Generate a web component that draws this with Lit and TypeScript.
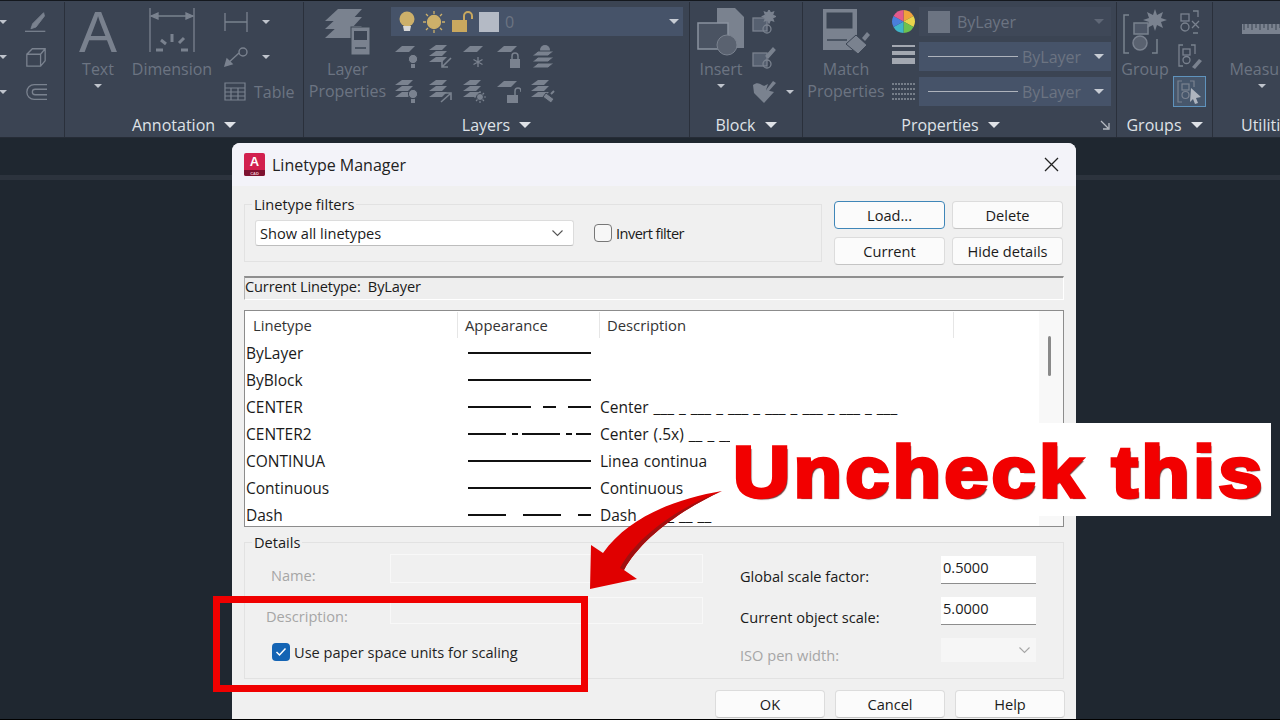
import { css, html, LitElement, svg } from 'lit';
import { customElement } from 'lit/decorators.js';

const rows = [
  { name: 'ByLayer', dash: '', desc: '' },
  { name: 'ByBlock', dash: '', desc: '' },
  { name: 'CENTER', dash: '63 12 13 12 23', desc: 'Center ___ _ ___ _ ___ _ ___ _ ___ _ ___ _ ___' },
  { name: 'CENTER2', dash: '38 6 6 4 38 6 6 4 15', desc: 'Center (.5x) __ _ __' },
  { name: 'CONTINUA', dash: '', desc: 'Linea continua' },
  { name: 'Continuous', dash: '', desc: 'Continuous' },
  { name: 'Dash', dash: '38 17 38 17 13', desc: 'Dash __ __ __ __' },
];

const DIM = '#7a828f';

const oneSheet = (badge: unknown) => html`<svg width="24" height="24" viewBox="0 0 24 24" fill=${DIM}>
  <path d="M7 1h13l-6 6H0z" />${badge}
</svg>`;

const stackWith = (badge: unknown) => html`<svg width="24" height="24" viewBox="0 0 24 24" fill=${DIM}>
  <path d="M7 0h11l-5 5H0z" /><path d="M7 6h11l-5 5H0z" /><path d="M7 12h11l-5 5H0z" />${badge}
</svg>`;

const bulbBadge = svg`<circle cx="18" cy="14" r="4.6" stroke="#3b4453" /><rect x="16" y="19" width="4" height="4" />`;
const lockBadge = svg`<rect x="13" y="14" width="10" height="9" /><path d="M15 14v-3a3 3 0 0 1 6 0v3" fill="none" stroke=${DIM} stroke-width="1.5" />`;
const openLockBadge = svg`<rect x="10" y="15" width="11" height="8" /><path d="M18 15v-4a3 3 0 0 1 6 0v1" fill="none" stroke=${DIM} stroke-width="1.5" />`;
const snowBadge = svg`<path d="M15 12v10M10.5 14.5l9 5M10.5 19.5l9-5" stroke=${DIM} stroke-width="1.3" fill="none" />`;
const sunBadge = svg`<circle cx="17" cy="17" r="3.5" stroke="#3b4453" /><path d="M17 11v2M17 21v2M11 17h2M21 17h2M13 13l1.5 1.5M19.5 19.5L21 21M13 21l1.5-1.5M19.5 14.5L21 13" stroke=${DIM} stroke-width="1.2" fill="none" />`;
const arrowDownBadge = svg`<path d="M22 13l-9 9M13 16v6h6" stroke=${DIM} stroke-width="1.6" fill="none" />`;
const arrowUpBadge = svg`<path d="M12 22l9-8M15 13h7v7" stroke=${DIM} stroke-width="1.6" fill="none" />`;
const brushBadge = svg`<path d="M15 13l8 6-3 4-8-6z" stroke="#3b4453" /><path d="M20 14l3-3" stroke=${DIM} stroke-width="2" />`;

@customElement('app-root')
export class AppRoot extends LitElement {
  static override styles = css`
    :host {
      display: block;
      width: 1280px;
      height: 720px;
      font-family: 'Open Sans', 'Liberation Sans', sans-serif;
    }

    .stage {
      position: relative;
      width: 1280px;
      height: 720px;
      overflow: hidden;
      background: #1f2730;
    }

    /* ribbon */
    .ribbon {
      display: flex;
      background: #3b4453;
      border-top: 1px solid #14181e;
      box-sizing: border-box;
      height: 138px;
      border-bottom: 1px solid #262c36;
      padding-top: 1px;
    }
    .panel {
      flex: none;
      display: flex;
      flex-direction: column;
      border-right: 1px solid #2a303b;
      box-sizing: border-box;
    }
    .body {
      display: flex;
      height: 112px;
    }
    .title {
      height: 24px;
      display: flex;
      align-items: center;
      justify-content: center;
      gap: 9px;
      color: #dfe2e7;
      font-size: 16px;
      position: relative;
    }
    .title i {
      border-left: 6px solid transparent;
      border-right: 6px solid transparent;
      border-top: 6px solid #dfe2e7;
    }
    .corner {
      position: absolute;
      right: 6px;
      top: 7px;
    }
    .tool {
      flex: none;
      display: flex;
      flex-direction: column;
      align-items: center;
      color: #6c7482;
      font-size: 16px;
      line-height: 22px;
      white-space: nowrap;
      text-align: center;
    }
    .tool .pic {
      height: 52px;
      margin-top: 4px;
      display: flex;
      align-items: center;
      justify-content: center;
    }
    .caret {
      border-left: 4px solid transparent;
      border-right: 4px solid transparent;
      border-top: 4px solid #bfc4cc;
      display: inline-block;
    }
    .tool .caret {
      margin-top: 4px;
    }
    .bigA {
      display: block;
      height: 46px;
      font-family: 'Liberation Sans', sans-serif;
      font-size: 57px;
      line-height: 46px;
      color: #79818e;
    }
    .ruler {
      margin: 0 0 6px 36px;
    }
    .stack3 {
      flex: none;
      display: flex;
      flex-direction: column;
      margin-top: 2px;
    }
    .stack3 > div {
      height: 35px;
      display: flex;
      align-items: center;
      color: #6c7482;
      font-size: 16px;
    }
    .clipped {
      width: 64px;
    }
    .clipped .rowc {
      width: 48px;
      margin-left: -1px;
      gap: 18px;
      justify-content: space-between;
    }
    .layerPick {
      width: 292px;
      height: 29px;
      margin-top: 5px;
      background: #465369;
      display: flex;
      align-items: center;
      padding: 0 4px 0 8px;
      box-sizing: border-box;
      gap: 6px;
      color: #6c7482;
      font-size: 16px;
    }
    .layerPick .caretbig,
    .drop .caretbig {
      margin-left: auto;
      border-left: 5px solid transparent;
      border-right: 5px solid transparent;
      border-top: 5px solid #c7ccd4;
    }
    .swatch {
      width: 20px;
      height: 20px;
      background: #b4bac5;
    }
    .iconRow {
      display: flex;
      gap: 10px;
      margin-left: 4px;
    }
    .iconRow.first {
      margin-top: 9px;
    }
    .iconRow.second {
      margin-top: 11px;
    }
    .propGrid {
      display: grid;
      grid-template-columns: 23px 192px;
      grid-auto-rows: 29px;
      column-gap: 4px;
      row-gap: 6px;
      margin: 5px 0 0 3px;
      align-items: center;
    }
    .drop {
      height: 29px;
      display: flex;
      align-items: center;
      padding: 0 7px 0 9px;
      box-sizing: border-box;
      background: #465369;
      color: #6c7482;
      font-size: 16px;
      gap: 4px;
    }
    .drop.off {
      background: #3f4858;
    }
    .drop.off .caretbig {
      border-top-color: #5f6776;
    }
    .drop .ln {
      width: 90px;
      height: 1px;
      background: #aeb3bc;
    }
    .drop .sw {
      width: 22px;
      height: 22px;
      background: #6c7482;
      margin-right: 3px;
    }
    .selected {
      width: 33px;
      height: 31px;
      border: 1px solid #5f93bd;
      background: #47576c;
      display: flex;
      align-items: center;
      justify-content: center;
      box-sizing: border-box;
    }
    .strip {
      height: 5px;
      margin-top: 37px;
      background: #2c333d;
    }

    /* dialog */
    .dialog {
      position: absolute;
      left: 232px;
      top: 143px;
      width: 844px;
      height: 579px;
      border-radius: 8px 8px 0 0;
      background: #f0f0f0;
      color: #1a1a1a;
      font-size: 14.6px;
      display: flex;
      flex-direction: column;
      overflow: hidden;
    }
    .dlgTitle {
      flex: none;
      height: 43px;
      background: #f3f3f9;
      display: flex;
      align-items: center;
      padding: 0 17px 0 12px;
      gap: 7px;
      font-size: 16px;
      color: #222;
    }
    .dlgTitle .close {
      margin-left: auto;
    }
    .dlgBody {
      padding: 10px 12px 0;
      display: flex;
      flex-direction: column;
    }
    .topRow {
      display: flex;
      height: 69px;
    }
    fieldset {
      margin: 0;
      padding: 0;
      min-width: 0;
      box-sizing: border-box;
      border: 1px solid #e2e2e2;
    }
    legend {
      margin-left: 7px;
      padding: 0 2px;
      line-height: 16px;
      font-size: 14.6px;
    }
    .filters {
      width: 578px;
      height: 66px;
      display: flex;
      align-items: flex-start;
      padding: 8px 0 0 10px;
    }
    .filters legend {
      margin-left: -3px;
    }
    .combo {
      width: 319px;
      height: 26px;
      background: #fff;
      border: 1px solid #dcdcdc;
      border-bottom-color: #bdbdbd;
      border-radius: 3px;
      display: flex;
      align-items: center;
      justify-content: space-between;
      padding: 0 10px 0 4px;
      box-sizing: border-box;
    }
    .fcheck {
      width: 18px;
      height: 18px;
      margin: 4px 4px 0 20px;
      border: 1px solid #777;
      border-radius: 4px;
      background: #f7f7f7;
      box-sizing: border-box;
      flex: none;
    }
    .flabel {
      margin-top: 3px;
      letter-spacing: -0.55px;
    }
    .btnGrid {
      margin: 5px 0 0 12px;
      display: grid;
      grid-template-columns: 111px 111px;
      grid-auto-rows: 28px;
      column-gap: 7px;
      row-gap: 8px;
    }
    .btn {
      display: flex;
      align-items: center;
      justify-content: center;
      background: #fbfbfb;
      border: 1px solid #dcdcdc;
      border-bottom-color: #c4c4c4;
      border-radius: 4px;
      box-sizing: border-box;
    }
    .btn.def {
      border: 1.5px solid #3f86b8;
    }
    .current {
      margin-top: 11px;
      height: 24px;
      border-top: 2px solid #8f8f8f;
      border-left: 1px solid #b0b0b0;
      border-right: 1px solid #fff;
      border-bottom: 1px solid #fff;
      box-sizing: border-box;
      line-height: 17px;
      background: #eeeeee;
      white-space: pre;
      letter-spacing: -0.15px;
    }
    .list {
      margin-top: 10px;
      width: 820px;
      height: 217px;
      background: #fff;
      border: 1px solid #8c8c8c;
      box-sizing: border-box;
      display: flex;
      overflow: hidden;
    }
    .table {
      flex: 1;
      min-width: 0;
      overflow: hidden;
    }
    .head,
    .row {
      display: grid;
      grid-template-columns: 213px 142px 354px;
    }
    .head {
      height: 28px;
      color: #333;
      align-items: center;
      font-size: 14.8px;
    }
    .head span {
      height: 26px;
      line-height: 26px;
      padding-left: 7px;
      border-right: 1px solid #e6e6e6;
    }
    .head span:first-child {
      padding-left: 8px;
    }
    .row {
      height: 27px;
      align-items: center;
      font-size: 15.5px;
      white-space: nowrap;
    }
    .row .nm {
      padding-left: 1px;
    }
    .row svg {
      margin-left: 10px;
      display: block;
    }
    .row .ds {
      word-spacing: 1px;
    }
    .scroll {
      flex: none;
      width: 24px;
      background: #f8f8f8;
    }
    .thumb {
      width: 3px;
      height: 40px;
      margin: 25px 0 0 9px;
      background: #8a8a8a;
      border-radius: 2px;
    }
    .details {
      margin-top: 7px;
      width: 820px;
      height: 145px;
      display: flex;
    }
    .leftCol {
      width: 460px;
      flex: none;
      margin-top: 4px;
    }
    .field {
      display: grid;
      grid-template-columns: 145px 313px;
      align-items: start;
      color: #a6a6a6;
      line-height: 20px;
    }
    .field .box {
      border: 1px solid #f8f8f8;
      box-sizing: border-box;
    }
    .f1 { height: 29px; }
    .f1 .box { height: 29px; }
    .f1 span { padding: 11px 0 0 26px; }
    .f2 { height: 27px; margin-top: 14px; }
    .f2 .box { height: 27px; }
    .f2 span { padding: 9px 0 0 21px; }
    .paper {
      display: flex;
      align-items: center;
      gap: 4px;
      margin: 18px 0 0 27px;
      color: #1f1f1f;
    }
    .tick {
      width: 18px;
      height: 18px;
      border-radius: 4px;
      background: #1464b4;
      display: flex;
      align-items: center;
      justify-content: center;
    }
    .rightCol {
      flex: none;
      margin: 6px 0 0 35px;
      display: grid;
      grid-template-columns: 201px 95px;
      grid-template-rows: 28px 28px 24px;
      row-gap: 13px;
      align-items: start;
      line-height: 20px;
    }
    .rightCol .lb {
      padding-top: 10px;
    }
    .rightCol .iso {
      color: #a6a6a6;
      padding-top: 7px;
    }
    .num {
      height: 28px;
      background: #fff;
      border-bottom: 1px solid #8d8d8d;
      box-sizing: border-box;
      padding-left: 2px;
      line-height: 22px;
    }
    .isoBox {
      height: 24px;
      background: #f6f6f6;
      display: flex;
      align-items: center;
      justify-content: flex-end;
      padding-right: 6px;
    }
    .bottom {
      margin: 11px -1px 0 0;
      display: flex;
      justify-content: flex-end;
      gap: 10px;
    }
    .bottom .btn {
      width: 110px;
      height: 28px;
    }

    /* overlays */
    .note {
      position: absolute;
      left: 730px;
      top: 423px;
      width: 541px;
      height: 93px;
      background: #fff;
    }
    .note b {
      display: block;
      margin: 10px 0 0 3px;
      font-family: 'Liberation Sans', Arial, sans-serif;
      font-size: 72px;
      line-height: 78px;
      font-weight: 700;
      letter-spacing: 3px;
      white-space: nowrap;
      color: #f20000;
      -webkit-text-stroke: 3.4px #f20000;
      text-shadow: 2px 2px 1px #6b3a3a;
      transform: scaleX(1.1);
      transform-origin: left center;
    }
    .arrow {
      position: absolute;
      left: 0;
      top: 0;
    }
    .redbox {
      position: absolute;
      left: 213px;
      top: 596px;
      width: 375px;
      height: 96px;
      border: 7px solid #f00000;
      box-sizing: border-box;
    }
    .edge {
      position: absolute;
      left: 0;
      right: 0;
      bottom: 0;
      height: 1px;
      background: #000;
    }
  `;

  private _row(r: (typeof rows)[number]) {
    return html`<div class="row">
      <span class="nm">${r.name}</span>
      <svg width="123" height="4" viewBox="0 0 123 4">
        <line x1="0" x2="123" y1="2" y2="2" stroke="#111" stroke-width="2" stroke-dasharray=${r.dash || 'none'} />
      </svg>
      <span class="ds">${r.desc}</span>
    </div>`;
  }

  private _ribbon() {
    return html`<div class="ribbon">
      <div class="panel" style="width:65px">
        <div class="body">
          <div class="stack3 clipped">
            <div class="rowc">
              <span class="caret"></span>
              <svg width="26" height="26" viewBox="0 0 26 26" fill="none" stroke=${DIM}>
                <path d="M22 2L9 15l-2 6 6-2L23 6z" fill=${DIM} /><path d="M0 24h24" stroke-width="1.5" />
              </svg>
            </div>
            <div class="rowc">
              <span class="caret"></span>
              <svg width="24" height="24" viewBox="0 0 24 24" fill="none" stroke=${DIM} stroke-width="1.4">
                <path d="M2 9h15v13H2zM2 9l6-6h14v13l-5 6M17 9l5-6" />
              </svg>
            </div>
            <div class="rowc">
              <span class="caret"></span>
              <svg width="24" height="20" viewBox="0 0 24 20" fill="none" stroke=${DIM} stroke-width="1.4">
                <path d="M24 2H10a8 8 0 0 0 0 16h14M24 7H11a3 3 0 0 0 0 6h13" />
              </svg>
            </div>
          </div>
        </div>
      </div>

      <div class="panel" style="width:239px">
        <div class="body">
          <div class="tool" style="width:66px">
            <div class="pic"><span class="bigA">A</span></div>
            Text
            <span class="caret"></span>
          </div>
          <div class="tool" style="width:82px">
            <div class="pic">
              <svg width="48" height="50" viewBox="0 0 48 50" fill="none" stroke=${DIM} stroke-width="1.3">
                <path d="M2 1v44M46 1v44M3 9h42" />
                <path d="M3 9l7-3v6zM45 9l-7-3v6z" fill=${DIM} />
                <path d="M24 27v8M13 33l5 4M36 31l-5 5M8 43h7M33 43h7" stroke-width="3" />
              </svg>
            </div>
            Dimension
          </div>
          <div class="stack3" style="margin-left:11px">
            <div>
              <svg width="24" height="22" viewBox="0 0 24 22" fill="none" stroke=${DIM} stroke-width="1.3">
                <path d="M1 2v18M23 1v20M1 11h22" />
              </svg>
              <span class="caret" style="margin-left:14px"></span>
            </div>
            <div>
              <svg width="24" height="20" viewBox="0 0 24 20" fill="none" stroke=${DIM} stroke-width="1.4">
                <circle cx="19" cy="5" r="4" /><path d="M15 6L3 17" /><path d="M1 19l2-7 5 5z" fill=${DIM} />
              </svg>
              <span class="caret" style="margin-left:14px"></span>
            </div>
            <div>
              <svg width="22" height="19" viewBox="0 0 22 19" fill="none" stroke=${DIM} stroke-width="1.2">
                <path d="M1 1h20v17H1zM1 6h20M1 10h20M1 14h20M7 6v12M14 6v12" />
              </svg>
              <span style="margin-left:8px">Table</span>
            </div>
          </div>
        </div>
        <div class="title">Annotation <i></i></div>
      </div>

      <div class="panel" style="width:386px">
        <div class="body">
          <div class="tool" style="width:87px">
            <div class="pic">
              <svg width="48" height="48" viewBox="0 0 48 48" fill=${DIM}>
                <path d="M14 1h24L27 13H1z" /><path d="M14 9h24L27 21H1z" /><path d="M14 18h24L27 30H1z" />
                <rect x="27" y="19" width="19" height="28" stroke="#3b4453" stroke-width="1" />
                <rect x="30" y="23" width="13" height="9" fill="#3b4453" />
                <path d="M31 40h11" stroke="#3b4453" stroke-width="1.5" />
              </svg>
            </div>
            Layer<br />Properties
          </div>
          <div>
            <div class="layerPick">
              <svg width="16" height="22" viewBox="0 0 16 22">
                <circle cx="8" cy="8" r="7.5" fill="#cdb06a" /><path d="M4 15h8l-1 5H5z" fill="#d8d8d8" />
              </svg>
              <svg width="22" height="22" viewBox="0 0 22 22" stroke="#cdb06a" stroke-width="1.3" style="margin-left:2px">
                <circle cx="11" cy="11" r="6.5" fill="#cdb06a" />
                <path d="M11 0v3M11 19v3M0 11h3M19 11h3M3 3l2 2M17 17l2 2M3 19l2-2M17 5l2-2" />
              </svg>
              <svg width="22" height="22" viewBox="0 0 22 22">
                <rect x="1" y="9" width="15" height="12" fill="#c9a85f" />
                <path d="M13 9V5a4 4 0 0 1 8 0v3" fill="none" stroke="#c9a85f" stroke-width="2" />
              </svg>
              <span class="swatch"></span>
              <span>0</span>
              <span class="caretbig"></span>
            </div>
            <div class="iconRow first">
              ${oneSheet(bulbBadge)} ${stackWith(arrowDownBadge)} ${oneSheet(snowBadge)} ${oneSheet(lockBadge)}
              <svg width="24" height="24" viewBox="0 0 24 24" fill=${DIM}>
                <circle cx="14" cy="5" r="5" />
                <path d="M7 6h16l-6 5H1z" stroke="#3b4453" /><path d="M7 12h16l-6 5H1z" stroke="#3b4453" /><path d="M7 18h16l-6 5H1z" stroke="#3b4453" />
              </svg>
            </div>
            <div class="iconRow second">
              ${stackWith(bulbBadge)} ${stackWith(arrowUpBadge)} ${stackWith(sunBadge)} ${oneSheet(openLockBadge)}
              ${stackWith(brushBadge)}
            </div>
          </div>
        </div>
        <div class="title">Layers <i></i></div>
      </div>

      <div class="panel" style="width:113px">
        <div class="body">
          <div class="tool" style="width:62px">
            <div class="pic">
              <svg width="48" height="48" viewBox="0 0 48 48" fill=${DIM}>
                <path d="M20 0h18l9 9v31H20z" />
                <rect x="1" y="15" width="30" height="26" fill="#4a5362" stroke="#8b93a0" stroke-width="1.5" />
                <circle cx="30" cy="37" r="10" fill="#5a6270" stroke=${DIM} />
              </svg>
            </div>
            Insert
            <span class="caret"></span>
          </div>
          <div class="stack3">
            <div>
              <svg width="24" height="24" viewBox="0 0 24 24" fill="none" stroke=${DIM} stroke-width="1.3">
                <rect x="1" y="8" width="14" height="13" fill="#566070" /><circle cx="15" cy="19" r="4" />
                <path d="M17 0l1.5 3 3-1-1 3 3 1.5-3 1.5 1 3-3-1-1.5 3-1.5-3-3 1 1-3-3-1.5 3-1.5-1-3 3 1z" fill=${DIM} />
              </svg>
            </div>
            <div>
              <svg width="24" height="24" viewBox="0 0 24 24" fill="none" stroke=${DIM} stroke-width="1.3">
                <rect x="1" y="8" width="14" height="13" fill="#566070" /><circle cx="15" cy="19" r="4" />
                <path d="M14 11l7-8 2 2-7 8z" fill=${DIM} />
              </svg>
            </div>
            <div>
              <svg width="24" height="24" viewBox="0 0 24 24" fill=${DIM}>
                <path d="M1 5c4-3 6-2 11 1l4-2-2 6 8 2-10 11L2 13z" />
                <path d="M14 10l7-9 3 2-8 9z" />
              </svg>
              <span class="caret" style="margin-left:10px"></span>
            </div>
          </div>
        </div>
        <div class="title">Block <i></i></div>
      </div>

      <div class="panel" style="width:314px">
        <div class="body">
          <div class="tool" style="width:86px">
            <div class="pic">
              <svg width="48" height="48" viewBox="0 0 48 48" fill=${DIM}>
                <rect x="1" y="1" width="34" height="41" />
                <rect x="5" y="5" width="25" height="15" fill="#3b4453" stroke="#3b4453" />
                <path d="M5 32h20" stroke="#3b4453" stroke-width="1.5" />
                <path d="M24 36l10-9 11 10-9 9z" stroke="#3b4453" />
                <path d="M40 30l5-6 3 3-5 6z" />
              </svg>
            </div>
            Match<br />Properties
          </div>
          <div class="propGrid">
            <svg width="23" height="23" viewBox="0 0 23 23">
              <path d="M11.5 11.5V0A11.5 11.5 0 0 1 21.5 6z" fill="#f0a23c" />
              <path d="M11.5 11.5L21.5 6A11.5 11.5 0 0 1 21.5 17z" fill="#e9d44c" />
              <path d="M11.5 11.5L21.5 17A11.5 11.5 0 0 1 11.5 23z" fill="#6cc24f" />
              <path d="M11.5 11.5V23A11.5 11.5 0 0 1 1.5 17z" fill="#3fb5c9" />
              <path d="M11.5 11.5L1.5 17A11.5 11.5 0 0 1 1.5 6z" fill="#4a7fdc" />
              <path d="M11.5 11.5L1.5 6A11.5 11.5 0 0 1 11.5 0z" fill="#e35a8c" />
            </svg>
            <div class="drop off"><span class="sw"></span>ByLayer<span class="caretbig"></span></div>
            <svg width="23" height="24" viewBox="0 0 23 24" fill="#a3a8b1">
              <rect y="0" width="23" height="2" /><rect y="6" width="23" height="4" /><rect y="13" width="23" height="6" />
            </svg>
            <div class="drop"><span class="ln"></span>ByLayer<span class="caretbig"></span></div>
            <svg width="23" height="20" viewBox="0 0 23 20" stroke="#8b919c" stroke-dasharray="2 1">
              <path d="M0 2h23M0 7h23M0 12h23M0 17h23" stroke-width="1.5" />
            </svg>
            <div class="drop"><span class="ln"></span>ByLayer<span class="caretbig"></span></div>
          </div>
        </div>
        <div class="title" style="padding-right:18px">
          Properties <i></i>
          <svg class="corner" width="10" height="10" viewBox="0 0 10 10" fill="none" stroke="#b5bac2" stroke-width="1.3">
            <path d="M1 1l7 7M9 3v6H3" />
          </svg>
        </div>
      </div>

      <div class="panel" style="width:96px">
        <div class="body">
          <div class="tool" style="width:56px">
            <div class="pic">
              <svg width="46" height="46" viewBox="0 0 46 46" fill="none" stroke=${DIM} stroke-width="1.5">
                <path d="M7 6H2v38h5M30 44h5V30" />
                <rect x="12" y="14" width="14" height="11" fill="#4e5767" />
                <circle cx="18" cy="34" r="7" fill="#5a6270" />
                <path d="M33 0l2 6 6-3-2 6 6 2-6 2 2 6-6-3-2 6-2-6-6 3 2-6-6-2 6-2-2-6 6 3z" fill=${DIM} stroke="none" />
              </svg>
            </div>
            Group
          </div>
          <div class="stack3" style="width:33px;align-items:center">
            <div>
              <svg width="20" height="24" viewBox="0 0 20 24" fill="none" stroke=${DIM} stroke-width="1.3">
                <rect x="1" y="4" width="8" height="7" /><circle cx="5" cy="17" r="4" />
                <path d="M13 1h5v6M18 23h-5M12 11l7 7M19 11l-7 7" />
              </svg>
            </div>
            <div>
              <svg width="24" height="26" viewBox="0 0 24 26" fill="none" stroke=${DIM} stroke-width="1.3">
                <path d="M5 1H1v21h4M13 1h4v9" />
                <rect x="5" y="5" width="7" height="6" /><circle cx="8.5" cy="16" r="3.5" />
                <path d="M14 23l7-8 3 2-7 8z" fill=${DIM} stroke="none" />
              </svg>
            </div>
            <div>
              <div class="selected">
                <svg width="26" height="24" viewBox="0 0 26 24" fill="none" stroke=${DIM} stroke-width="1.2">
                  <path d="M5 1H1v21h4M13 1h4v6" />
                  <rect x="5" y="4" width="7" height="6" /><circle cx="8.5" cy="15" r="3.5" />
                  <path d="M14 8l10 9-5 1 2 5-3 1-2-5-3 3z" fill="#aeb4be" stroke="none" />
                </svg>
              </div>
            </div>
          </div>
        </div>
        <div class="title">Groups <i></i></div>
      </div>

      <div class="panel" style="width:100px;border-right:0">
        <div class="body">
          <div class="tool" style="width:98px">
            <div class="pic">
              <svg class="ruler" width="76" height="10" viewBox="0 0 76 10">
                <rect width="76" height="10" fill=${DIM} />
                <path d="M2 0v6M6 0v4M10 0v6M14 0v4M18 0v6M22 0v4M26 0v6M30 0v4M34 0v6M38 0v4" stroke="#3b4453" />
              </svg>
            </div>
            Measure
            <span class="caret"></span>
          </div>
        </div>
        <div class="title" style="justify-content:flex-start;padding-left:28px">Utilities</div>
      </div>
    </div>`;
  }

  private _dialog() {
    return html`<div class="dialog">
      <div class="dlgTitle">
        <svg width="21" height="23" viewBox="0 0 21 23">
          <path d="M2 0h17a2 2 0 0 1 2 2v19a2 2 0 0 1-2 2H2a2 2 0 0 1-2-2V2a2 2 0 0 1 2-2z" fill="#d2204e" />
          <path d="M0 17h21v4a2 2 0 0 1-2 2H2a2 2 0 0 1-2-2z" fill="#7d1230" />
          <text x="10.5" y="13" font-size="13" font-weight="700" text-anchor="middle" fill="#fff" font-family="Liberation Sans">A</text>
          <text x="10.5" y="21.5" font-size="4" font-weight="700" text-anchor="middle" fill="#f0c0cc" font-family="Liberation Sans">CAD</text>
        </svg>
        <span>Linetype Manager</span>
        <svg class="close" width="15" height="15" viewBox="0 0 15 15" stroke="#222" stroke-width="1.3">
          <path d="M1 1l13 13M14 1L1 14" />
        </svg>
      </div>

      <div class="dlgBody">
        <div class="topRow">
          <fieldset class="filters">
            <legend>Linetype filters</legend>
            <div class="combo">
              <span>Show all linetypes</span>
              <svg width="11" height="7" viewBox="0 0 11 7" fill="none" stroke="#555" stroke-width="1.1">
                <path d="M0.5 0.5l5 5 5-5" />
              </svg>
            </div>
            <span class="fcheck"></span>
            <span class="flabel">Invert filter</span>
          </fieldset>
          <div class="btnGrid">
            <div class="btn def">Load...</div>
            <div class="btn">Delete</div>
            <div class="btn">Current</div>
            <div class="btn">Hide details</div>
          </div>
        </div>

        <div class="current">Current Linetype:  ByLayer</div>

        <div class="list">
          <div class="table">
            <div class="head"><span>Linetype</span><span>Appearance</span><span>Description</span></div>
            ${rows.map((r) => this._row(r))}
          </div>
          <div class="scroll"><div class="thumb"></div></div>
        </div>

        <fieldset class="details">
          <legend>Details</legend>
          <div class="leftCol">
            <div class="field f1"><span>Name:</span><div class="box"></div></div>
            <div class="field f2"><span>Description:</span><div class="box"></div></div>
            <div class="paper">
              <span class="tick">
                <svg width="12" height="10" viewBox="0 0 12 10" fill="none" stroke="#fff" stroke-width="1.5">
                  <path d="M1.5 5l3 3 6-6.5" />
                </svg>
              </span>
              Use paper space units for scaling
            </div>
          </div>
          <div class="rightCol">
            <span class="lb">Global scale factor:</span><div class="num">0.5000</div>
            <span class="lb">Current object scale:</span><div class="num">5.0000</div>
            <span class="iso">ISO pen width:</span>
            <div class="isoBox">
              <svg width="11" height="7" viewBox="0 0 11 7" fill="none" stroke="#a6a6a6" stroke-width="1.1">
                <path d="M0.5 0.5l5 5 5-5" />
              </svg>
            </div>
          </div>
        </fieldset>

        <div class="bottom">
          <div class="btn">OK</div>
          <div class="btn">Cancel</div>
          <div class="btn">Help</div>
        </div>
      </div>
    </div>`;
  }

  override render() {
    return html`<div class="stage">
      ${this._ribbon()}
      <div class="strip"></div>
      ${this._dialog()}
      <div class="note"><b>Uncheck this</b></div>
      <svg class="arrow" width="1280" height="720" viewBox="0 0 1280 720">
        <path d="M722 491C680 498 630 515 603 553L591 545L590 589L637 579L624 570C640 540 680 510 722 491Z" fill="#e00000" />
        <path d="M722 491C680 510 640 540 624 570L620 568C636 538 676 508 722 491Z" fill="#a01010" />
      </svg>
      <div class="redbox"></div>
      <div class="edge"></div>
    </div>`;
  }
}

declare global {
  interface HTMLElementTagNameMap {
    'app-root': AppRoot;
  }
}
